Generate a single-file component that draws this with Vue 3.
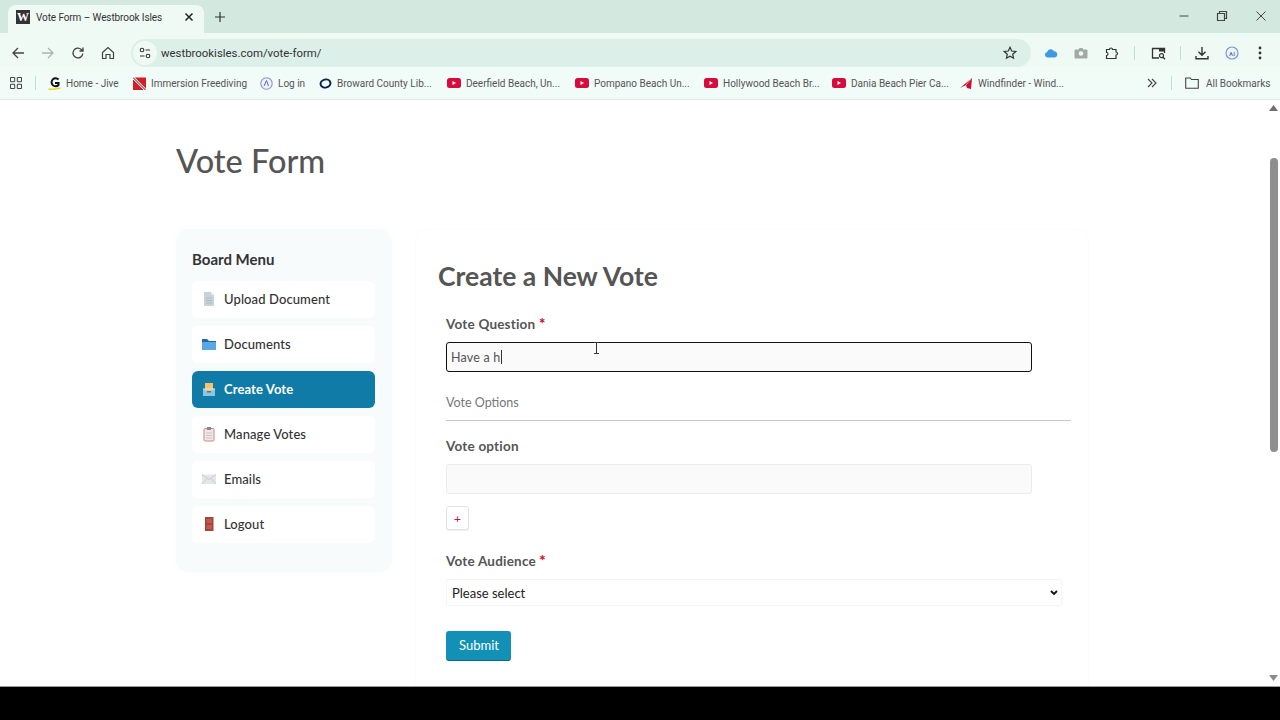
<template>
  <div class="screen">
    <div class="tabstrip">
      <div class="tab">
        <span class="favicon">W</span>
        <span class="tab-title">Vote Form – Westbrook Isles</span>
        <svg class="tab-close" width="10" height="10" viewBox="0 0 10 10"><path d="M1.500 1.500l7 7M8.500 1.500l-7 7" stroke="#222" stroke-width="1.500" /></svg>
      </div>
      <svg class="new-tab" width="12" height="12" viewBox="0 0 12 12"><path d="M6 1v10M1 6h10" stroke="#333" stroke-width="1.200" /></svg>
      <div class="window-controls">
        <svg class="minimize" width="12" height="12" viewBox="0 0 12 12"><path d="M1.500 6h9" stroke="#444" stroke-width="1" /></svg>
        <svg width="12" height="12" viewBox="0 0 12 12"><path d="M3.500 3V1.500h7v7H9M1.500 3.500h7v7h-7z" fill="none" stroke="#444" stroke-width="1.200" /></svg>
        <svg width="12" height="12" viewBox="0 0 12 12"><path d="M1.500 1.500l9 9M10.500 1.500l-9 9" stroke="#444" stroke-width="1" /></svg>
      </div>
    </div>

    <div class="toolbar">
      <svg class="tool" width="14" height="14" viewBox="0 0 14 14"><path d="M13 7H2M7 2L2 7l5 5" fill="none" stroke="#444" stroke-width="1.300" /></svg>
      <svg class="tool" width="14" height="14" viewBox="0 0 14 14"><path d="M1 7h11M7 2l5 5-5 5" fill="none" stroke="#aab4b0" stroke-width="1.300" /></svg>
      <svg class="tool" width="14" height="14" viewBox="0 0 14 14"><path d="M11.800 7.500A4.900 4.900 0 1 1 10.300 3.500L12 5M12 1.500V5H8.500" fill="none" stroke="#444" stroke-width="1.300" /></svg>
      <svg class="tool" width="14" height="14" viewBox="0 0 14 14"><path d="M1.500 6.500L7 1.500l5.500 5v6h-3.500v-4h-4v4H1.500z" fill="none" stroke="#444" stroke-width="1.200" /></svg>
      <div class="omnibox">
        <span class="site-icon">
          <svg width="12" height="12" viewBox="0 0 12 12"><circle cx="3" cy="3" r="1.800" fill="none" stroke="#333" stroke-width="1.100" /><path d="M6.500 3H11M1 9h4.500" stroke="#333" stroke-width="1.100" /><circle cx="9" cy="9" r="1.800" fill="none" stroke="#333" stroke-width="1.100" /></svg>
        </span>
        <span class="url">westbrookisles.com/vote-form/</span>
        <svg class="star" width="14" height="14" viewBox="0 0 14 14"><path d="M7 1.300l1.700 3.700 4 .5-3 2.700.8 4L7 10.300l-3.500 1.900.8-4-3-2.700 4-.5z" fill="none" stroke="#333" stroke-width="1.200" /></svg>
      </div>
      <div class="extensions">
        <svg width="14" height="10" viewBox="0 0 14 10"><path d="M3.500 9.500a2.800 2.800 0 0 1-.4-5.500A3.800 3.800 0 0 1 10 3.200a3.200 3.200 0 0 1 .8 6.300z" fill="#3d9be0" /></svg>
        <svg width="14" height="12" viewBox="0 0 14 12"><path d="M1.500 2.500h3L5.500 1h3l1 1.500h3a1 1 0 0 1 1 1v7a1 1 0 0 1-1 1h-11a1 1 0 0 1-1-1v-7a1 1 0 0 1 1-1z" fill="#a3a9a7" /><circle cx="7" cy="6.500" r="2.300" fill="#eef7f3" /></svg>
        <svg class="puzzle" width="14" height="14" viewBox="0 0 14 14"><path d="M1.500 3.500h3a1.500 1.500 0 0 1 3 0h3.500V6a1.500 1.500 0 0 1 0 3v3.500H1.500V9.500a1.500 1.500 0 0 0 0-3z" fill="none" stroke="#333" stroke-width="1.200" /></svg>
        <i class="sep"></i>
        <svg width="15" height="13" viewBox="0 0 15 13"><path d="M8 11H1.500V1.500h12V6" fill="none" stroke="#333" stroke-width="1.300" /><rect x="8" y="1.500" width="5.500" height="3" fill="#333" /><circle cx="10.500" cy="8.700" r="2" fill="none" stroke="#333" stroke-width="1.200" /><path d="M12 10.300l2 2" stroke="#333" stroke-width="1.300" /></svg>
        <i class="sep tight"></i>
        <svg class="download" width="14" height="14" viewBox="0 0 14 14"><path d="M7 1v8M3.500 5.800L7 9.300l3.500-3.500M1 10v2.700h12V10" fill="none" stroke="#333" stroke-width="1.400" /></svg>
        <svg width="14" height="14" viewBox="0 0 14 14"><circle cx="7" cy="7" r="6" fill="#eef4fb" stroke="#7d97c9" stroke-width="1.200" /><text x="7" y="9.500" text-anchor="middle" class="ai-text">AI</text></svg>
        <svg class="dots" width="4" height="14" viewBox="0 0 4 14"><circle cx="2" cy="2" r="1.400" fill="#333" /><circle cx="2" cy="7" r="1.400" fill="#333" /><circle cx="2" cy="12" r="1.400" fill="#333" /></svg>
      </div>
    </div>

    <div class="bookmarks">
      <svg class="apps" width="12" height="12" viewBox="0 0 12 12"><path d="M.5.5h4.200v4.200H.5zM7.300.5h4.200v4.200H7.300zM.5 7.300h4.200v4.200H.5zM7.300 7.300h4.200v4.200H7.300z" fill="none" stroke="#444" stroke-width="1" /></svg>
      <i class="sep first"></i>
      <div class="bm-list">
        <div v-for="b in bookmarks" :key="b.label" class="bm" :style="{ width: b.width + 'px' }">
          <svg v-if="b.icon === 'g'" width="13" height="13" viewBox="0 0 12 13"><path d="M10 2.500A4 4 0 1 0 10 8V6H6.500" fill="none" stroke="#111" stroke-width="2" /><path d="M0 12c4 1 8 0 12-1" stroke="#e3d92a" stroke-width="1.500" fill="none" /></svg>
          <svg v-else-if="b.icon === 'flag'" width="13" height="13" viewBox="0 0 13 13"><rect width="13" height="13" y=".5" fill="#d0202a" /><path d="M0 .5l13 13" stroke="#fff" stroke-width="2.500" /><path d="M0 .5l13 13" stroke="#222" stroke-width="1" /></svg>
          <svg v-else-if="b.icon === 'login'" width="13" height="13" viewBox="0 0 13 13"><circle cx="6.500" cy="6.500" r="5.700" fill="#f0f3fa" stroke="#8b97c4" stroke-width="1.100" /><path d="M4 9l2.500-5.500L8.500 9" fill="none" stroke="#5a68a8" stroke-width="1" /></svg>
          <svg v-else-if="b.icon === 'ring'" width="13" height="11" viewBox="0 0 13 11"><ellipse cx="6.500" cy="5.500" rx="5" ry="4" fill="none" stroke="#10204e" stroke-width="2" transform="rotate(-15 6.500 5.500)" /></svg>
          <svg v-else-if="b.icon === 'yt'" width="14" height="10" viewBox="0 0 14 10"><rect width="14" height="10" rx="2.500" fill="#d80b3e" /><path d="M5.500 3l3.500 2-3.500 2z" fill="#fff" /></svg>
          <svg v-else width="13" height="13" viewBox="0 0 13 13"><path d="M0 11L12 1l-1 11-4-1-1-3z" fill="#c8102e" /><path d="M6 8l5-6" stroke="#f7cfd6" stroke-width=".7" /></svg>
          <span>{{ b.label }}</span>
        </div>
      </div>
      <svg class="more" width="10" height="10" viewBox="0 0 10 10"><path d="M1 1l4 4-4 4M5 1l4 4-4 4" fill="none" stroke="#444" stroke-width="1.100" /></svg>
      <i class="sep"></i>
      <svg class="folder" width="14" height="12" viewBox="0 0 14 12"><path d="M.7 1h4.500l1.300 1.500h6.800v8.800H.7z" fill="none" stroke="#444" stroke-width="1.100" /></svg>
      <span class="all-bm">All Bookmarks</span>
    </div>

    <div class="viewport">
      <div class="page">
        <h1 class="page-title">Vote Form</h1>
        <div class="columns">
          <aside class="sidebar">
            <h3 class="menu-title">Board Menu</h3>
            <nav class="menu">
              <a v-for="m in menu" :key="m.label" class="menu-item" :class="{ active: m.active }">
                <svg class="menu-icon" width="16" height="16" viewBox="0 0 16 16" v-html="m.svg"></svg>
                {{ m.label }}
              </a>
            </nav>
          </aside>
          <main class="card">
            <h2 class="card-title">Create a New Vote</h2>
            <form class="form" @submit.prevent>
              <label class="label">Vote Question <b>*</b></label>
              <div class="input focused">Have a h<span class="caret"></span></div>
              <div class="section">Vote Options</div>
              <label class="label option-label">Vote option</label>
              <div class="input"></div>
              <button type="button" class="add">+</button>
              <label class="label audience-label">Vote Audience <b>*</b></label>
              <select class="select">
                <option>Please select</option>
              </select>
              <button type="submit" class="submit">Submit</button>
            </form>
          </main>
        </div>
        <svg class="ibeam" width="7" height="12" viewBox="0 0 7 12"><path d="M1 .5h5M3.500.5v11M1 11.500h5" fill="none" stroke="#333" stroke-width="1" /></svg>
      </div>
      <div class="scrollbar">
        <svg width="9" height="6" viewBox="0 0 9 6"><path d="M0 6l4.500-6L9 6z" fill="#6f6f6f" /></svg>
        <div class="track"><div class="thumb"></div></div>
        <svg width="9" height="6" viewBox="0 0 9 6"><path d="M0 0l4.500 6L9 0z" fill="#8a8a8a" /></svg>
      </div>
    </div>

    <div class="taskbar"></div>
  </div>
</template>

<script setup>
const bookmarks = [
  { label: 'Home - Jive', icon: 'g', width: 85 },
  { label: 'Immersion Freediving', icon: 'flag', width: 127 },
  { label: 'Log in', icon: 'login', width: 59 },
  { label: 'Broward County Lib...', icon: 'ring', width: 128 },
  { label: 'Deerfield Beach, Un...', icon: 'yt', width: 128 },
  { label: 'Pompano Beach Un...', icon: 'yt', width: 129 },
  { label: 'Hollywood Beach Br...', icon: 'yt', width: 128 },
  { label: 'Dania Beach Pier Ca...', icon: 'yt', width: 128 },
  { label: 'Windfinder - Wind...', icon: 'wind', width: 120 },
]

const menu = [
  { label: 'Upload Document', svg: '<path d="M3 1h7l3 3v11H3z" fill="#c9d2d8"/><path d="M10 1l3 3h-3z" fill="#e4e9ec"/><path d="M5 7h6M5 9.500h6M5 12h6" stroke="#aeb8bf"/>' },
  { label: 'Documents', svg: '<path d="M1 3h5l2 2h7v8.500H1z" fill="#1f6aa5"/><rect x="1" y="6" width="14" height="8" rx="1" fill="#5aa7e6"/>' },
  { label: 'Create Vote', active: true, svg: '<rect x="2" y="8" width="12" height="7" fill="#8ec3e6"/><rect x="4" y="2" width="8" height="8" fill="#f2c46d"/><path d="M2 8h12" stroke="#dbeaf5"/><rect x="6" y="10" width="4" height="1.500" fill="#3b7fb0"/>' },
  { label: 'Manage Votes', svg: '<rect x="3" y="2.500" width="10" height="12.500" rx="1" fill="#f4e5e5" stroke="#c98a8a"/><rect x="6" y="1" width="4" height="3" fill="#888"/><path d="M5 7h6M5 9.500h6M5 12h6" stroke="#c8c8c8"/>' },
  { label: 'Emails', svg: '<rect x="1" y="3.500" width="14" height="9.500" fill="#e3e7ea"/><path d="M1 3.500l7 5 7-5M1 13l5-5.500M15 13l-5-5.500" fill="none" stroke="#bcc3c8" stroke-width=".8"/>' },
  { label: 'Logout', svg: '<rect x="4" y="1" width="8.500" height="14" fill="#a8433a"/><path d="M5.500 3h5.500v4H5.500zM5.500 9h5.500v4H5.500z" fill="#c05a4e"/>' },
]
</script>

<style scoped>
.screen {
  width: 1280px;
  height: 720px;
  display: flex;
  flex-direction: column;
  overflow: hidden;
  font-family: "Lato", "Liberation Sans", sans-serif;
  background: #fff;
}

.tabstrip {
  height: 33px;
  flex-shrink: 0;
  display: flex;
  align-items: flex-end;
  background: #d3e9e0;
  padding-left: 8px;
}

.tab {
  width: 196px;
  height: 28px;
  padding: 0 10px 4px 8px;
  box-sizing: border-box;
  display: flex;
  align-items: center;
  background: #effaf5;
  border-radius: 8px 8px 0 0;
  font-family: "Roboto", sans-serif;
  font-size: 10px;
  letter-spacing: -0.1px;
  color: #333;
}

.favicon {
  width: 14px;
  height: 14px;
  background: #333;
  color: #fff;
  font-family: "Liberation Serif", serif;
  font-weight: 700;
  font-size: 12px;
  line-height: 14px;
  text-align: center;
  margin-right: 6px;
  flex-shrink: 0;
}

.tab-title {
  flex: 1;
  white-space: nowrap;
}

.new-tab {
  margin: 0 0 10px 10px;
}

.window-controls {
  margin-left: auto;
  align-self: flex-start;
  margin-top: 10px;
  padding-right: 13px;
  display: flex;
  gap: 27px;
}

.minimize {
  margin-right: -1px;
}

.toolbar {
  height: 34px;
  flex-shrink: 0;
  box-sizing: border-box;
  padding: 6px 0 0 11px;
  display: flex;
  align-items: center;
  background: #effaf5;
}

.tool {
  margin-right: 16px;
}

.omnibox {
  width: 900px;
  height: 28px;
  box-sizing: border-box;
  display: flex;
  align-items: center;
  border-radius: 14px;
  background: #dcefe8;
  padding-right: 14px;
  flex-shrink: 0;
}

.site-icon {
  width: 24px;
  height: 24px;
  margin-left: 2px;
  border-radius: 50%;
  background: #effaf5;
  display: flex;
  align-items: center;
  justify-content: center;
}

.url {
  flex: 1;
  margin-left: 4px;
  font-family: "Roboto", sans-serif;
  font-size: 11.400px;
  color: #333;
}

.extensions {
  display: flex;
  align-items: center;
  gap: 16px;
  margin-left: 13px;
}

.sep {
  width: 1px;
  height: 14px;
  background: #b7e4d6;
  flex-shrink: 0;
}

.sep.tight {
  margin-left: -2px;
}

.puzzle {
  margin-left: 1px;
  margin-right: -1px;
}

.download {
  margin-left: -2px;
}

.dots {
  margin-left: 3px;
}

.ai-text {
  font-family: "Roboto", sans-serif;
  font-size: 6px;
  font-weight: 700;
  fill: #5a7ab5;
}

.bookmarks {
  height: 33px;
  flex-shrink: 0;
  display: flex;
  align-items: center;
  background: #f1fbf7;
  border-bottom: 1px solid #e2e8e5;
  box-sizing: border-box;
  padding-left: 10px;
  font-family: "Roboto", sans-serif;
  font-size: 10px;
  color: #555;
}

.sep.first {
  margin: 0 0 0 13px;
}

.bm-list {
  display: flex;
  margin-left: 12px;
}

.bm {
  display: flex;
  align-items: center;
  gap: 5px;
  white-space: nowrap;
  flex-shrink: 0;
}

.bm svg {
  flex-shrink: 0;
}

.more {
  margin-left: 67px;
  margin-right: 14px;
}

.folder {
  margin-left: 13px;
  margin-right: 7px;
}

.viewport {
  flex: 1;
  min-height: 0;
  display: flex;
  background: #fff;
}

.page {
  flex: 1;
  position: relative;
  overflow: hidden;
  padding-left: 176px;
  color: #555;
}

.page-title {
  margin: 38px 0 0;
  font-size: 32.500px;
  line-height: 46px;
  font-weight: 500;
  color: #555;
}

.columns {
  display: flex;
  align-items: flex-start;
  gap: 23px;
  margin-top: 45px;
}

.sidebar {
  width: 216px;
  height: 343px;
  box-sizing: border-box;
  padding: 20px 17px 0 16px;
  background: #f8fbfb;
  border-radius: 12px;
  box-shadow: 0 0 6px rgba(250, 252, 252, 0.9);
}

.menu-title {
  margin: 0;
  font-size: 15px;
  line-height: 20px;
  font-weight: 700;
  color: #333;
}

.menu {
  display: flex;
  flex-direction: column;
  gap: 8px;
  margin-top: 12px;
}

.menu-item {
  height: 37px;
  box-sizing: border-box;
  padding: 0 0 2px 9px;
  display: flex;
  align-items: center;
  gap: 7px;
  border-radius: 6px;
  background: #fff;
  font-size: 13px;
  letter-spacing: 0.1px;
  font-weight: 500;
  color: #333;
}

.menu-item.active {
  background: #0f7ba6;
  color: #fff;
  font-weight: 700;
}

.menu-icon {
  flex-shrink: 0;
}

.card {
  width: 674px;
  height: 470px;
  box-sizing: border-box;
  padding: 27px 0 0 22px;
  border: 1px solid #fcfcfc;
  border-radius: 12px;
}

.card-title {
  margin: 0;
  font-size: 26.500px;
  line-height: 38px;
  font-weight: 700;
  color: #555;
}

.form {
  display: flex;
  flex-direction: column;
  align-items: flex-start;
  padding-left: 8px;
  margin-top: 20px;
}

.label {
  height: 18px;
  font-size: 13.500px;
  line-height: 18px;
  letter-spacing: 0.2px;
  font-weight: 700;
  color: #555;
}

.label b {
  font-size: 15px;
  line-height: 0;
  color: #c8102e;
}

.input {
  width: 586px;
  height: 30px;
  margin-top: 9px;
  box-sizing: border-box;
  padding-left: 4px;
  display: flex;
  align-items: center;
  border: 1px solid #ececec;
  border-radius: 3px;
  background: #fafafa;
  font-size: 12.500px;
  letter-spacing: 0.2px;
  color: #555;
}

.input.focused {
  border: 1.500px solid #111;
}

.caret {
  width: 1px;
  height: 14px;
  background: #333;
}

.section {
  width: 625px;
  margin-top: 22px;
  padding-bottom: 8px;
  border-bottom: 1px solid #c8c8c8;
  font-size: 12.500px;
  line-height: 18px;
  color: #777;
}

.option-label {
  margin-top: 16px;
}

.add {
  width: 23px;
  height: 24px;
  margin-top: 12px;
  padding: 0;
  border: 1px solid #e2e2e2;
  border-radius: 3px;
  background: #fff;
  box-shadow: 0 1px 1px #eee;
  color: #c01245;
  font-family: inherit;
  font-size: 12px;
}

.audience-label {
  margin-top: 22px;
}

.select {
  appearance: none;
  width: 616px;
  height: 27px;
  margin-top: 9px;
  padding: 0 5px;
  border: 1px solid #f4f4f4;
  border-radius: 2px;
  background: #fff url("data:image/svg+xml,%3Csvg xmlns='http://www.w3.org/2000/svg' width='8' height='6' viewBox='0 0 8 6'%3E%3Cpath d='M1 1l3 3 3-3' fill='none' stroke='%23111' stroke-width='1.800'/%3E%3C/svg%3E") no-repeat right 3px center;
  color: #222;
  font-family: inherit;
  font-size: 13px;
}

.submit {
  width: 65px;
  height: 30px;
  margin-top: 25px;
  padding: 0 0 1px 1px;
  border: none;
  border-bottom: 1px solid #0b6a8a;
  border-radius: 3px;
  background: #1290b6;
  color: #fff;
  font-family: inherit;
  font-size: 13px;
}

.ibeam {
  position: absolute;
  left: 593px;
  top: 242px;
}

.scrollbar {
  width: 15px;
  flex-shrink: 0;
  display: flex;
  flex-direction: column;
  align-items: center;
  padding: 5px 0 5px 1px;
  box-sizing: border-box;
  background: #fff;
}

.track {
  flex: 1;
  width: 100%;
  padding-top: 47px;
  box-sizing: border-box;
}

.thumb {
  width: 8px;
  height: 294px;
  margin-left: 4px;
  border-radius: 4px;
  background: #8e8e8e;
}

.taskbar {
  height: 34px;
  flex-shrink: 0;
  background: #000;
  border-top: 1px solid #9a9a9a;
  box-sizing: border-box;
}
</style>

<style>
body {
  margin: 0;
}
</style>
